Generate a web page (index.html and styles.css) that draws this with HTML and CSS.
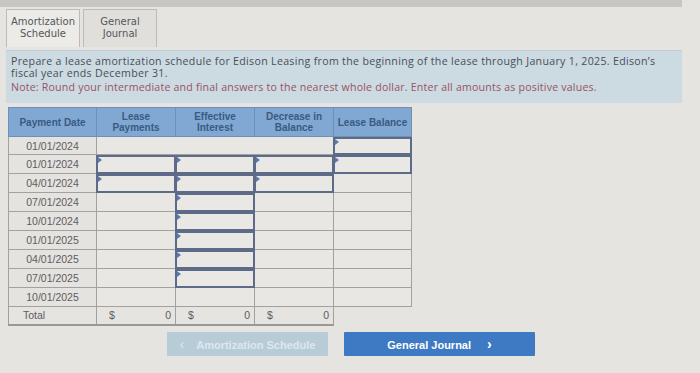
FILE: index.html
```html
<!DOCTYPE html>
<html>
<head>
<meta charset="utf-8">
<link rel="stylesheet" href="styles.css">
</head>
<body>
<div class="topbar"></div>
<div class="tabs">
  <div class="tab active">Amortization<br>Schedule</div>
  <div class="tab">General<br>Journal</div>
</div>
<div class="instr">
  <p>Prepare a lease amortization schedule for Edison Leasing from the beginning of the lease through January 1, 2025. Edison’s fiscal year ends December 31.</p>
  <p class="note">Note: Round your intermediate and final answers to the nearest whole dollar. Enter all amounts as positive values.</p>
</div>
<table class="sched">
  <colgroup><col class="c1"><col class="c2"><col class="c3"><col class="c4"><col class="c5"></colgroup>
  <thead>
    <tr><th>Payment Date</th><th>Lease<br>Payments</th><th>Effective<br>Interest</th><th>Decrease in<br>Balance</th><th>Lease Balance</th></tr>
  </thead>
  <tbody>
    <tr class="first"><td class="d">01/01/2024</td><td class="span" colspan="3"></td><td class="in"><span class="box"></span></td></tr>
    <tr><td class="d">01/01/2024</td><td class="in"><span class="box"></span></td><td class="in"><span class="box"></span></td><td class="in"><span class="box"></span></td><td class="in"><span class="box"></span></td></tr>
    <tr><td class="d">04/01/2024</td><td class="in"><span class="box"></span></td><td class="in"><span class="box"></span></td><td class="in"><span class="box"></span></td><td></td></tr>
    <tr><td class="d">07/01/2024</td><td></td><td class="in"><span class="box"></span></td><td></td><td></td></tr>
    <tr><td class="d">10/01/2024</td><td></td><td class="in"><span class="box"></span></td><td></td><td></td></tr>
    <tr><td class="d">01/01/2025</td><td></td><td class="in"><span class="box"></span></td><td></td><td></td></tr>
    <tr><td class="d">04/01/2025</td><td></td><td class="in"><span class="box"></span></td><td></td><td></td></tr>
    <tr><td class="d">07/01/2025</td><td></td><td class="in"><span class="box"></span></td><td></td><td></td></tr>
    <tr><td class="d">10/01/2025</td><td></td><td></td><td></td><td></td></tr>
    <tr class="total"><td class="tl">Total</td><td class="tot"><span>$</span><span>0</span></td><td class="tot"><span>$</span><span>0</span></td><td class="tot"><span>$</span><span>0</span></td><td class="blank"></td></tr>
  </tbody>
</table>
<div class="nav">
  <div class="btn prev"><span class="chev">‹</span>Amortization Schedule</div>
  <div class="btn next">General Journal<span class="chev r">›</span></div>
</div>
</body>
</html>
```
FILE: styles.css
```css
html, body {
  margin: 0;
  padding: 0;
}
body {
  background: #e6e4e0;
  width: 700px;
  height: 373px;
  overflow: hidden;
  font-family: "Liberation Sans", Arial, sans-serif;
}
.topbar {
  width: 682px;
  height: 7px;
  background: #c8c6c3;
}
.tabs {
  display: flex;
  gap: 3px;
  margin: 2px 0 0 6px;
}
.tab {
  width: 74px;
  height: 38px;
  box-sizing: border-box;
  border: 1px solid #bebbb7;
  border-bottom: none;
  background: #e1dfdb;
  font-family: "DejaVu Sans", Verdana, sans-serif;
  font-size: 10px;
  line-height: 12px;
  color: #55575c;
  text-align: center;
  padding-top: 6px;
}
.tab.active {
  background: #ecebe8;
}
.instr {
  width: 676px;
  box-sizing: border-box;
  margin: 3px 0 0 6px;
  height: 53px;
  background: #ccdae1;
  border-top: 1px solid #c0ccd2;
  padding: 5px 5px 0 5px;
  font-family: "Open Sans", sans-serif;
  font-size: 10.6px;
  line-height: 11.5px;
  color: #4a4e58;
}
.instr p {
  margin: 0;
  letter-spacing: 0.32px;
}
.instr .note {
  color: #9a5265;
  margin-top: 3px;
  letter-spacing: 0.2px;
}
.sched {
  border-collapse: collapse;
  margin: 4px 0 0 8px;
  table-layout: fixed;
  width: 403px;
  font-size: 10px;
}
.c1 { width: 88px; }
.c2 { width: 79px; }
.c3 { width: 79px; }
.c4 { width: 79px; }
.c5 { width: 78px; }
.sched th {
  background: #80a8d2;
  color: #3a5a82;
  font-weight: bold;
  font-size: 10px;
  line-height: 11px;
  height: 28px;
  padding: 0;
  border: 1px solid #6f8fb5;
  text-align: center;
}
.sched tbody tr {
  height: 19px;
}
.sched tbody tr.first,
.sched tbody tr.total {
  height: 18px;
}
.sched td {
  padding: 0;
  border: 1px solid #a3a19e;
  background: #e9e7e3;
  color: #5b5d62;
  text-align: center;
  font-size: 10.5px;
}
.sched td.d {
  background: #e5e3df;
}
.box {
  display: block;
  height: 19px;
  box-sizing: border-box;
  border: 2px solid #5d6b88;
  margin: -1px;
  position: relative;
  background: #eae8e5;
}
.first .box {
  height: 18px;
}
.box::before {
  content: "";
  position: absolute;
  left: 0;
  top: 0;
  border-top: 3px solid transparent;
  border-bottom: 3px solid transparent;
  border-left: 4px solid #5b78b0;
}
.sched tr.total td {
  background: #e6e4e0;
  border-bottom: 2px solid #9a9895;
}
.sched td.tl {
  text-align: left;
  padding-left: 14px;
}
.sched td.tot {
  text-align: left;
}
.tot span:first-child {
  float: left;
  margin-left: 12px;
}
.tot span:last-child {
  float: right;
  margin-right: 4px;
}
.sched tr.total td.blank {
  border: none;
  border-left: 1px solid #a3a19e;
  border-top: 1px solid #a3a19e;
  background: transparent;
}
.nav {
  display: flex;
  gap: 16px;
  margin: 6px 0 0 167px;
}
.btn {
  height: 24px;
  line-height: 24px;
  font-size: 11px;
  font-weight: bold;
  text-align: center;
  color: #fff;
  border-radius: 1px;
}
.chev {
  font-size: 14px;
  font-weight: normal;
  margin-right: 12px;
}
.chev.r {
  margin: 0 0 0 16px;
  font-weight: bold;
}
.prev {
  width: 161px;
  background: #b8ccd8;
  color: #dde7ee;
}
.next {
  width: 191px;
  background: #3e79c3;
}
```
